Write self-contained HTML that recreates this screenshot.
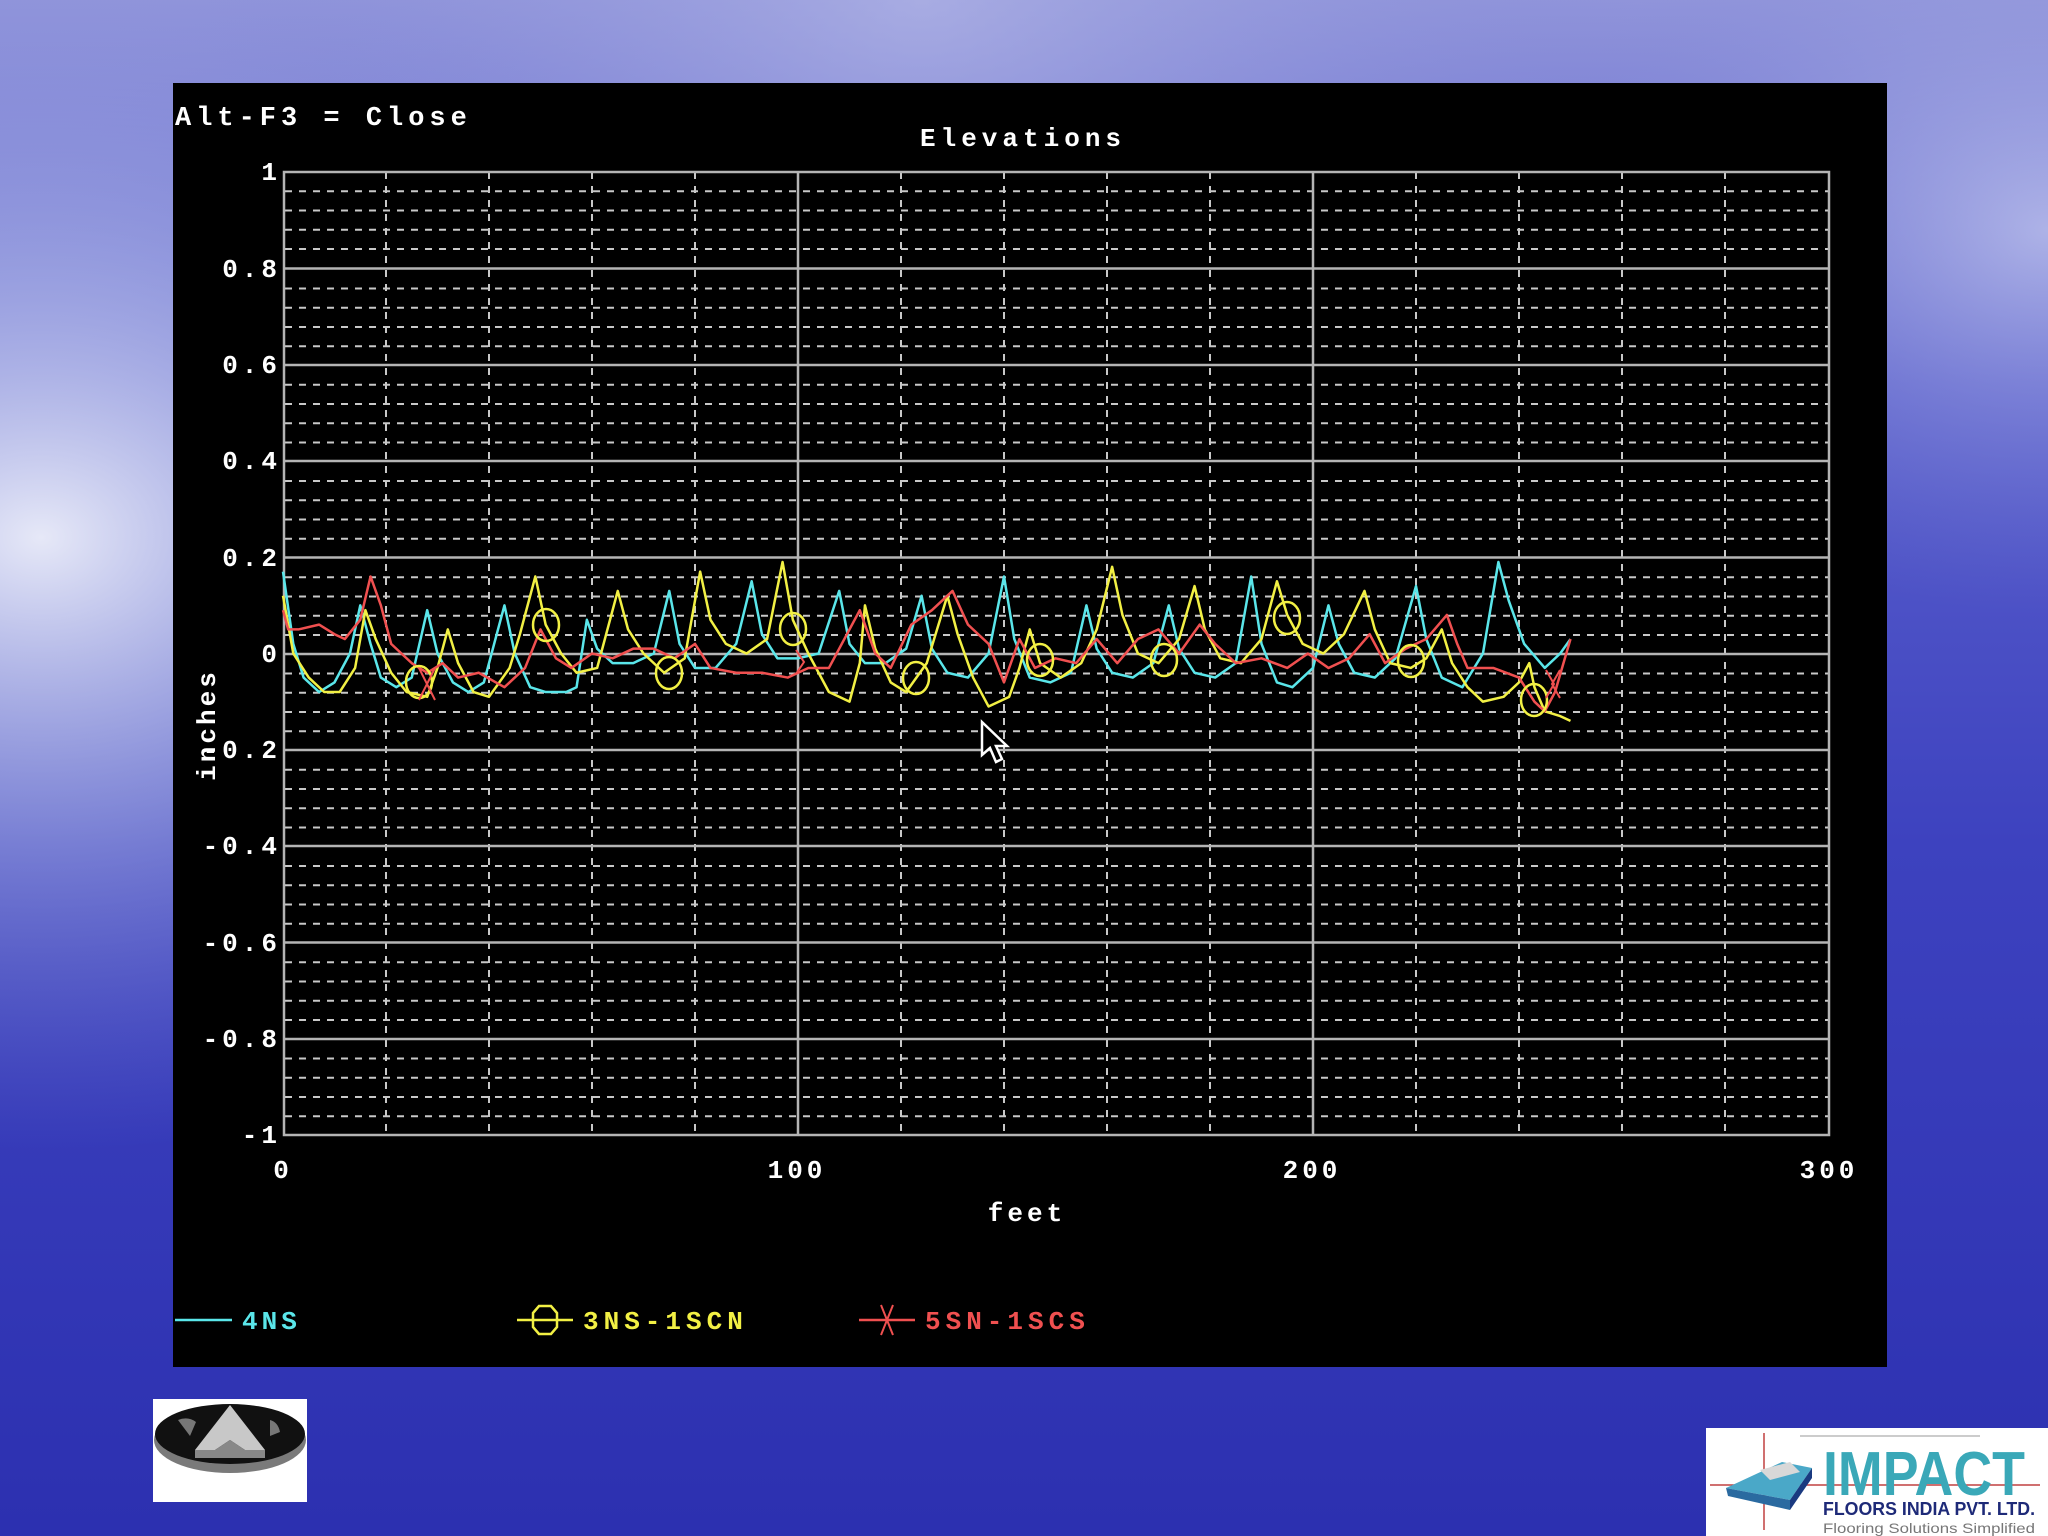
<!DOCTYPE html>
<html><head><meta charset="utf-8"><style>
html,body{margin:0;padding:0;width:2048px;height:1536px;overflow:hidden}
body{background:#3438b8}
svg{display:block}
text{font-family:"Liberation Mono","DejaVu Sans Mono",monospace;font-weight:bold}
</style></head><body>
<svg width="2048" height="1536" viewBox="0 0 2048 1536" xmlns="http://www.w3.org/2000/svg">
<defs>
<linearGradient id="bg" x1="0" y1="0" x2="0" y2="1">
<stop offset="0" stop-color="#9094da"/><stop offset="0.25" stop-color="#5a5fcc"/><stop offset="0.55" stop-color="#3d42bf"/><stop offset="1" stop-color="#2c30b0"/></linearGradient>
<radialGradient id="glow" cx="0.02" cy="0.35" r="0.4"><stop offset="0" stop-color="#eef0fa" stop-opacity="0.95"/><stop offset="0.45" stop-color="#b8c0ea" stop-opacity="0.55"/><stop offset="1" stop-color="#8088d8" stop-opacity="0"/></radialGradient>
<radialGradient id="glow2" cx="1" cy="0.15" r="0.25"><stop offset="0" stop-color="#c8cdf0" stop-opacity="0.7"/><stop offset="1" stop-color="#8088d8" stop-opacity="0"/></radialGradient>
<radialGradient id="glow3" cx="0.45" cy="0" r="0.35"><stop offset="0" stop-color="#b8bce8" stop-opacity="0.6"/><stop offset="1" stop-color="#8088d8" stop-opacity="0"/></radialGradient>
</defs>
<rect width="2048" height="1536" fill="url(#bg)"/>
<rect width="2048" height="1536" fill="url(#glow)"/>
<rect width="2048" height="1536" fill="url(#glow2)"/>
<rect width="2048" height="1536" fill="url(#glow3)"/>

<rect x="173" y="83" width="1714" height="1284" fill="#000"/>

<text x="175" y="125" fill="#fff" font-size="27" letter-spacing="5">Alt-F3 = Close</text>
<text x="920" y="146" fill="#fff" font-size="26" letter-spacing="5">Elevations</text>

<g stroke="#c8c8c8" stroke-width="2" stroke-dasharray="7,7" fill="none">
<path d="M386 172V1135M489 172V1135M592 172V1135M695 172V1135M901 172V1135M1004 172V1135M1107 172V1135M1210 172V1135M1416 172V1135M1519 172V1135M1622 172V1135M1725 172V1135"/>
<path d="M285 191.3H1828M285 210.5H1828M285 229.8H1828M285 249H1828
M285 288.5H1828M285 307.8H1828M285 327H1828M285 346.3H1828
M285 384.8H1828M285 404H1828M285 423.3H1828M285 442.5H1828
M285 481H1828M285 500.3H1828M285 519.5H1828M285 538.8H1828
M285 577.3H1828M285 596.5H1828M285 615.8H1828M285 635H1828
M285 673.5H1828M285 692.8H1828M285 712H1828M285 731.3H1828
M285 769.8H1828M285 789H1828M285 808.3H1828M285 827.5H1828
M285 866H1828M285 885.3H1828M285 904.5H1828M285 923.8H1828
M285 962.3H1828M285 981.5H1828M285 1000.8H1828M285 1020H1828
M285 1058.5H1828M285 1077.8H1828M285 1097H1828M285 1116.3H1828"/>
</g>
<g stroke="#b4b4b4" stroke-width="2.5" fill="none">
<rect x="284" y="172" width="1545" height="963"/>
<path d="M798 172V1135M1313 172V1135"/>
<path d="M284 268.5H1829M284 365H1829M284 461H1829M284 557.5H1829M284 654H1829M284 750H1829M284 846H1829M284 942.5H1829M284 1039H1829"/>
</g>

<g fill="#fff" font-size="26" letter-spacing="4" text-anchor="end">
<text x="281" y="180">1</text>
<text x="281" y="277">0.8</text>
<text x="281" y="373">0.6</text>
<text x="281" y="469">0.4</text>
<text x="281" y="566">0.2</text>
<text x="281" y="662">0</text>
<text x="281" y="758">-0.2</text>
<text x="281" y="854">-0.4</text>
<text x="281" y="951">-0.6</text>
<text x="281" y="1047">-0.8</text>
<text x="281" y="1143">-1</text>
</g>
<text transform="translate(215,725) rotate(-90)" fill="#fff" font-size="26" letter-spacing="3" text-anchor="middle">inches</text>
<g fill="#fff" font-size="26" letter-spacing="4" text-anchor="middle">
<text x="283" y="1178">0</text>
<text x="797" y="1178">100</text>
<text x="1312" y="1178">200</text>
<text x="1829" y="1178">300</text>
<text x="1027" y="1221">feet</text>
</g>

<g transform="matrix(5.15 0 0 -481.5 283 653.5)" fill="none" stroke-width="2.5" stroke-linejoin="round">
<polyline vector-effect="non-scaling-stroke" stroke="#5ae6ea" points="0,0.17 2,0.02 4,-0.05 7,-0.08 10,-0.06 13,0 15,0.1 17,0.02 19,-0.05 22,-0.07 25,-0.05 28,0.09 30,0 33,-0.06 36,-0.08 39,-0.06 43,0.1 45,0 48,-0.07 51,-0.08 55,-0.08 57,-0.07 59,0.07 61,0.01 64,-0.02 68,-0.02 72,0 75,0.13 77,0.02 80,-0.03 84,-0.03 88,0.02 91,0.15 93,0.04 96,-0.01 100,-0.01 104,0 108,0.13 110,0.02 113,-0.02 117,-0.02 121,0.01 124,0.12 126,0.01 129,-0.04 133,-0.05 137,0 140,0.16 142,0.03 145,-0.05 149,-0.06 153,-0.04 156,0.1 158,0.01 161,-0.04 165,-0.05 169,-0.02 172,0.1 174,0.01 177,-0.04 181,-0.05 185,-0.02 188,0.16 190,0.02 193,-0.06 196,-0.07 200,-0.03 203,0.1 205,0.02 208,-0.04 212,-0.05 216,-0.01 220,0.14 222,0.03 225,-0.05 229,-0.07 233,0 236,0.19 238,0.11 241,0.02 245,-0.03 248,0 250,0.03"/>
<polyline vector-effect="non-scaling-stroke" stroke="#f2f044" points="0,0.12 2,0 5,-0.05 8,-0.08 11,-0.08 14,-0.03 16,0.09 18,0.03 21,-0.04 24,-0.08 28,-0.09 30,-0.03 32,0.05 34,-0.02 37,-0.08 40,-0.09 44,-0.03 46,0.04 49,0.16 51,0.06 54,0 57,-0.04 61,-0.03 65,0.13 67,0.05 70,0 74,-0.04 78,-0.01 81,0.17 83,0.07 86,0.02 90,0 94,0.03 97,0.19 99,0.07 102,0 106,-0.08 110,-0.1 112,-0.02 113,0.1 115,0.01 118,-0.06 121,-0.08 125,-0.02 129,0.12 131,0.04 134,-0.05 137,-0.11 141,-0.09 143,-0.03 145,0.05 147,-0.02 151,-0.05 155,-0.02 158,0.05 161,0.18 163,0.08 166,0 170,-0.02 174,0.03 177,0.14 179,0.05 182,-0.01 186,-0.02 190,0.03 193,0.15 195,0.08 198,0.02 202,0 206,0.04 210,0.13 212,0.05 215,-0.02 219,-0.03 222,-0.01 225,0.05 227,-0.02 230,-0.07 233,-0.1 237,-0.09 240,-0.06 242,-0.02 243,-0.07 245,-0.12 248,-0.13 250,-0.14"/>
<polyline vector-effect="non-scaling-stroke" stroke="#f05050" points="0,0.09 1,0.05 3,0.05 7,0.06 10,0.04 12,0.03 15,0.07 17,0.16 19,0.1 21,0.02 25,-0.02 28,-0.04 31,-0.02 34,-0.05 38,-0.04 43,-0.07 47,-0.03 50,0.05 53,-0.01 56,-0.03 60,0 64,-0.01 68,0.01 72,0.01 76,-0.01 80,0.02 83,-0.03 88,-0.04 93,-0.04 98,-0.05 102,-0.03 106,-0.03 112,0.09 115,0 118,-0.03 122,0.06 126,0.09 130,0.13 133,0.06 137,0.02 140,-0.06 143,0.03 146,-0.03 150,-0.01 154,-0.02 158,0.03 162,-0.02 166,0.03 170,0.05 174,0 178,0.06 181,0.02 185,-0.02 190,-0.01 195,-0.03 199,0 203,-0.03 207,-0.01 211,0.04 214,-0.02 218,0.01 222,0.03 226,0.08 228,0.02 230,-0.03 235,-0.03 240,-0.05 243,-0.1 245,-0.12 247,-0.08 250,0.03"/>
</g>
<g fill="none" stroke="#f2f044" stroke-width="2.5">
<ellipse cx="419" cy="682" rx="13" ry="16"/><ellipse cx="546" cy="625" rx="13" ry="16"/><ellipse cx="669" cy="673" rx="13" ry="16"/><ellipse cx="793" cy="629" rx="13" ry="16"/><ellipse cx="916" cy="678" rx="13" ry="16"/><ellipse cx="1040" cy="660" rx="13" ry="16"/><ellipse cx="1164" cy="660" rx="13" ry="16"/><ellipse cx="1287" cy="618" rx="13" ry="16"/><ellipse cx="1411" cy="661" rx="13" ry="16"/><ellipse cx="1534" cy="700" rx="13" ry="16"/>
</g>
<g stroke="#f05050" stroke-width="2" fill="none">
<path d="M419 668l8 16-8 16M435 668l-8 16 8 16M796 650l8 12-8 12M1546 670l8 14-8 14M1560 670l-8 14 8 14"/>
</g>

<path d="M982 722 L982 755 L990 748 L996 762 L1002 759 L996 746 L1007 746 Z" fill="#000" stroke="#fff" stroke-width="2.5"/>

<line x1="175" y1="1320" x2="232" y2="1320" stroke="#5ae6ea" stroke-width="2.5"/>
<text x="242" y="1329" fill="#5ae6ea" font-size="26" letter-spacing="4">4NS</text>
<line x1="517" y1="1320" x2="573" y2="1320" stroke="#f2f044" stroke-width="2.5"/>
<path d="M539 1306h12l6 7v14l-6 7h-12l-6-7v-14z" fill="none" stroke="#f2f044" stroke-width="2.5"/>
<text x="583" y="1329" fill="#f2f044" font-size="26" letter-spacing="5">3NS-1SCN</text>
<line x1="859" y1="1320" x2="915" y2="1320" stroke="#f05050" stroke-width="2.5"/>
<path d="M881 1305l6 15-6 15M893 1305l-6 15 6 15" fill="none" stroke="#f05050" stroke-width="2"/>
<text x="925" y="1329" fill="#f05050" font-size="26" letter-spacing="5">5SN-1SCS</text>

<rect x="153" y="1399" width="154" height="103" fill="#fff"/>
<ellipse cx="230" cy="1440" rx="76" ry="33" fill="#7a7a7a"/>
<ellipse cx="230" cy="1434" rx="75" ry="30" fill="#111"/>
<path d="M230 1405 L265 1450 L245 1450 L230 1440 L215 1450 L195 1450 Z" fill="#c8c8c8"/>
<path d="M195 1450 L215 1450 L230 1440 L245 1450 L265 1450 L265 1458 L195 1458 Z" fill="#888"/>
<path d="M178 1420 q10-4 18 2 l-6 14 z M270 1420 q8 2 10 12 l-10 4 z" fill="#777"/>

<rect x="1706" y="1428" width="342" height="108" fill="#fff"/>
<line x1="1764" y1="1433" x2="1764" y2="1530" stroke="#c04040" stroke-width="1.5"/>
<line x1="1710" y1="1485" x2="2040" y2="1485" stroke="#c04040" stroke-width="1.5"/>
<line x1="1800" y1="1436" x2="1980" y2="1436" stroke="#999" stroke-width="1"/>
<path d="M1726 1488 L1782 1462 L1812 1468 L1790 1500 Z" fill="#4aa8c8"/>
<path d="M1726 1488 L1790 1500 L1790 1510 L1728 1496 Z" fill="#2a6aa0"/>
<path d="M1790 1500 L1812 1468 L1812 1478 L1790 1510 Z" fill="#1a3a80"/>
<path d="M1760 1470 L1790 1462 L1800 1472 L1770 1480 Z" fill="#d8d8d8"/>
<text x="1823" y="1495" fill="#3aa8b8" style="font-family:'Liberation Sans',sans-serif;font-weight:bold" font-size="62" textLength="202" lengthAdjust="spacingAndGlyphs">IMPACT</text>
<text x="1823" y="1515" fill="#1e2a78" style="font-family:'Liberation Sans',sans-serif;font-weight:bold" font-size="18" textLength="212" lengthAdjust="spacingAndGlyphs">FLOORS INDIA PVT. LTD.</text>
<text x="1823" y="1533" fill="#777" style="font-family:'Liberation Sans',sans-serif;font-weight:normal" font-size="14" textLength="212" lengthAdjust="spacingAndGlyphs">Flooring Solutions Simplified</text>
</svg>
</body></html>
